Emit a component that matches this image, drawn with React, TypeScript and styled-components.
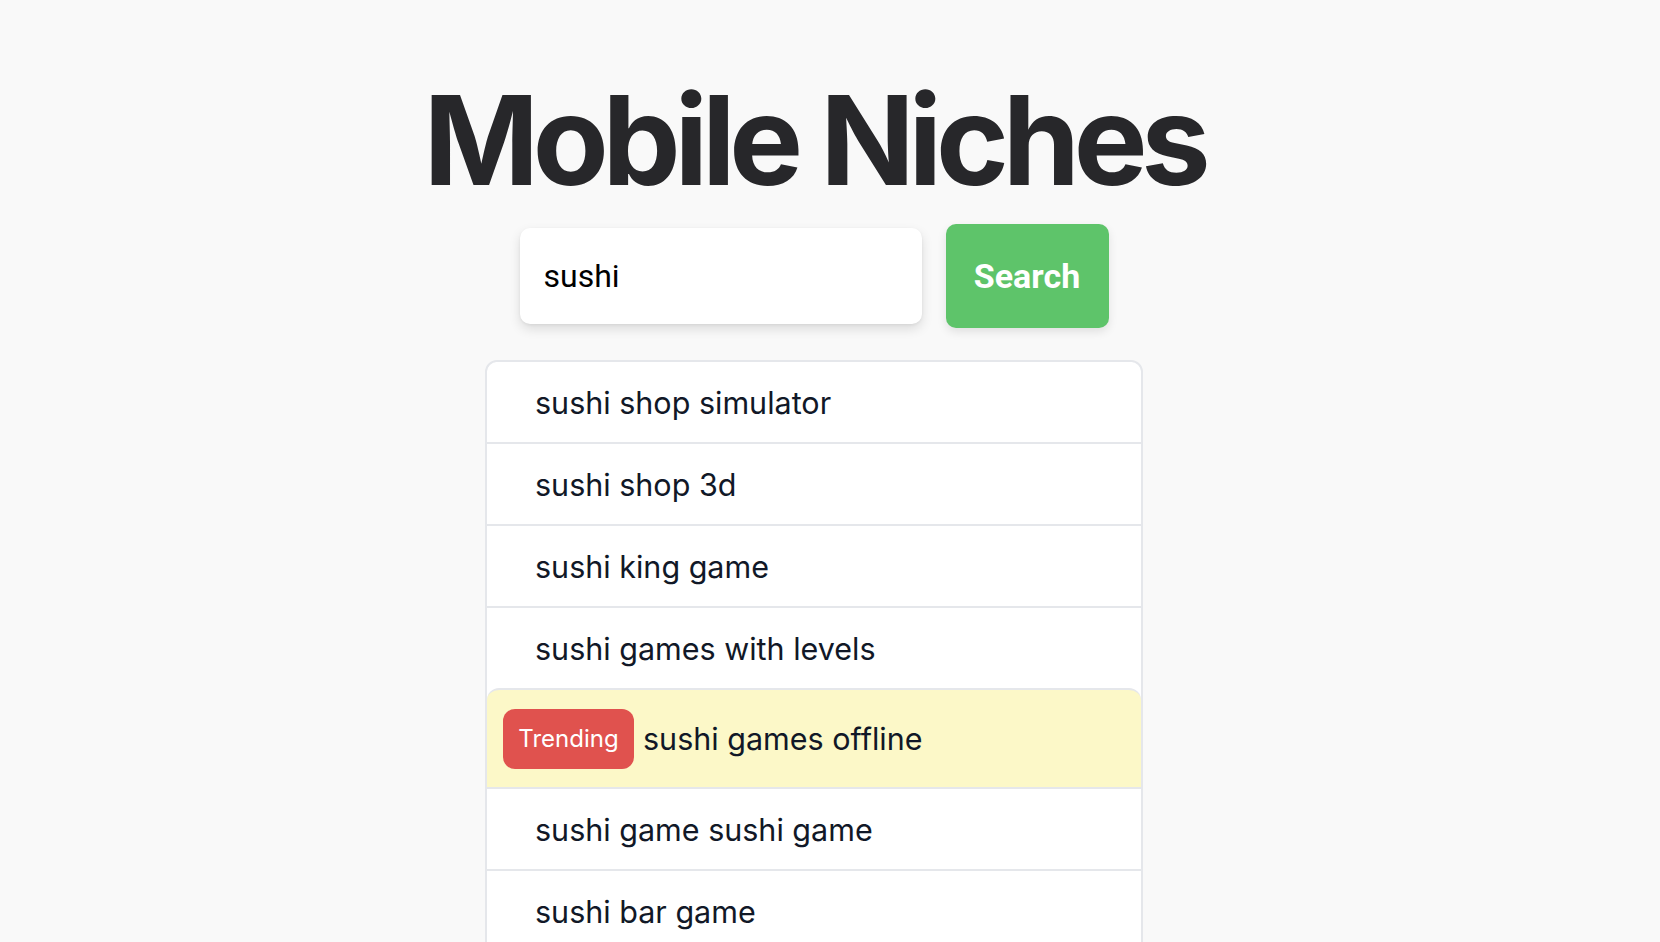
import styled, { createGlobalStyle } from "styled-components";

const GlobalStyle = createGlobalStyle`
  html, body {
    margin: 0;
    padding: 0;
    background: #f9f9f9;
  }
  body {
    font-family: Inter, "Liberation Sans", sans-serif;
    color: #111827;
  }
`;

const suggestions = [
  { text: "sushi shop simulator" },
  { text: "sushi shop 3d" },
  { text: "sushi king game" },
  { text: "sushi games with levels" },
  { text: "sushi games offline", trending: true },
  { text: "sushi game sushi game" },
  { text: "sushi bar game" },
];

const Page = styled.main`
  display: flex;
  flex-direction: column;
  align-items: center;
  padding: 78px 32px 0 0;
  height: 942px;
  box-sizing: border-box;
  overflow: hidden;
`;

const Title = styled.h1`
  margin: 0;
  font-family: Inter, "Liberation Sans", sans-serif;
  font-size: 124px;
  line-height: 1;
  font-weight: 700;
  letter-spacing: -0.05em;
  color: #27272a;
`;

const SearchRow = styled.form`
  display: flex;
  align-items: center;
  gap: 24px;
  margin-top: 22px;
`;

const SearchInput = styled.input`
  width: 402px;
  height: 96px;
  box-sizing: border-box;
  padding: 0 24px;
  border: none;
  border-radius: 10px;
  background: #fff;
  box-shadow: 0 5px 12px rgba(0, 0, 0, 0.12), 0 1px 3px rgba(0, 0, 0, 0.06);
  font-family: Roboto, "Liberation Sans", sans-serif;
  font-size: 32px;
  color: #000;
  outline: none;
`;

const SearchButton = styled.button`
  width: 163px;
  height: 104px;
  border: none;
  border-radius: 10px;
  background: #5ec46a;
  box-shadow: 0 4px 10px rgba(0, 0, 0, 0.1);
  color: #fff;
  font-family: Roboto, "Liberation Sans", sans-serif;
  font-size: 34px;
  font-weight: 700;
  cursor: pointer;
`;

const List = styled.ul`
  list-style: none;
  margin: 32px 0 0;
  padding: 0;
  width: 658px;
  box-sizing: border-box;
  border: 2px solid #e5e7eb;
  border-radius: 12px;
  background: #fff;
`;

const Item = styled.li<{ $trending?: boolean }>`
  display: flex;
  align-items: center;
  gap: 9px;
  height: ${(p) => (p.$trending ? "97px" : "80px")};
  padding-left: ${(p) => (p.$trending ? "16px" : "48px")};
  background: ${(p) => (p.$trending ? "#fcf8c8" : "#fff")};
  border-radius: ${(p) => (p.$trending ? "12px 12px 0 0" : "0")};
  font-size: 30.5px;
  color: #111827;

  & + & {
    border-top: 2px solid #e5e7eb;
  }
  &:first-child {
    border-radius: 12px 12px 0 0;
  }
`;

const Badge = styled.span`
  display: inline-flex;
  align-items: center;
  justify-content: center;
  width: 131px;
  height: 60px;
  border-radius: 12px;
  background: #e0524e;
  color: #fff;
  font-size: 24px;
`;

export default function App() {
  return (
    <>
      <GlobalStyle />
      <Page>
        <Title>Mobile Niches</Title>
        <SearchRow onSubmit={(e) => e.preventDefault()}>
          <SearchInput defaultValue="sushi" />
          <SearchButton type="submit">Search</SearchButton>
        </SearchRow>
        <List>
          {suggestions.map((item) => (
            <Item key={item.text} $trending={item.trending}>
              {item.trending && <Badge>Trending</Badge>}
              {item.text}
            </Item>
          ))}
        </List>
      </Page>
    </>
  );
}
